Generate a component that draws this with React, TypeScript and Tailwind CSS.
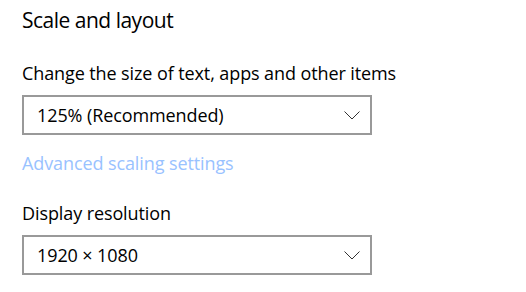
import { useState } from "react";

type DropdownProps = {
  value: string;
};

function Chevron() {
  return (
    <svg width="16" height="9" viewBox="0 0 16 9" fill="none" className="shrink-0">
      <path d="M0.5 0.5 L8 8 L15.5 0.5" stroke="#333" strokeWidth="1" />
    </svg>
  );
}

function Dropdown({ value }: DropdownProps) {
  return (
    <button
      type="button"
      className="flex h-[40px] w-[350px] items-center justify-between border-2 border-[#999999] bg-white pl-[13px] pr-[10px] text-left text-[18px] leading-[24px] tracking-[-0.1px] text-black"
    >
      <span>{value}</span>
      <Chevron />
    </button>
  );
}

export default function App() {
  const [scale] = useState("125% (Recommended)");
  const [resolution] = useState("1920 × 1080");

  return (
    <div
      className="h-[292px] w-[526px] overflow-hidden bg-white pl-[22px] text-black"
      style={{ fontFamily: '"Open Sans", "Noto Sans", sans-serif' }}
    >
      <h1 className="pt-[5px] text-[21px] leading-[30px] font-normal tracking-[-0.5px]">Scale and layout</h1>

      <p className="mt-[26px] text-[18px] leading-[24px] tracking-[-0.1px]">
        Change the size of text, apps and other items
      </p>
      <div className="mt-[10px]">
        <Dropdown value={scale} />
      </div>

      <a href="#" className="mt-[16px] block w-fit text-[18px] leading-[24px] tracking-[-0.1px] text-[#99c2ff]">
        Advanced scaling settings
      </a>

      <p className="mt-[26px] text-[18px] leading-[24px] tracking-[-0.1px]">Display resolution</p>
      <div className="mt-[10px]">
        <Dropdown value={resolution} />
      </div>
    </div>
  );
}
